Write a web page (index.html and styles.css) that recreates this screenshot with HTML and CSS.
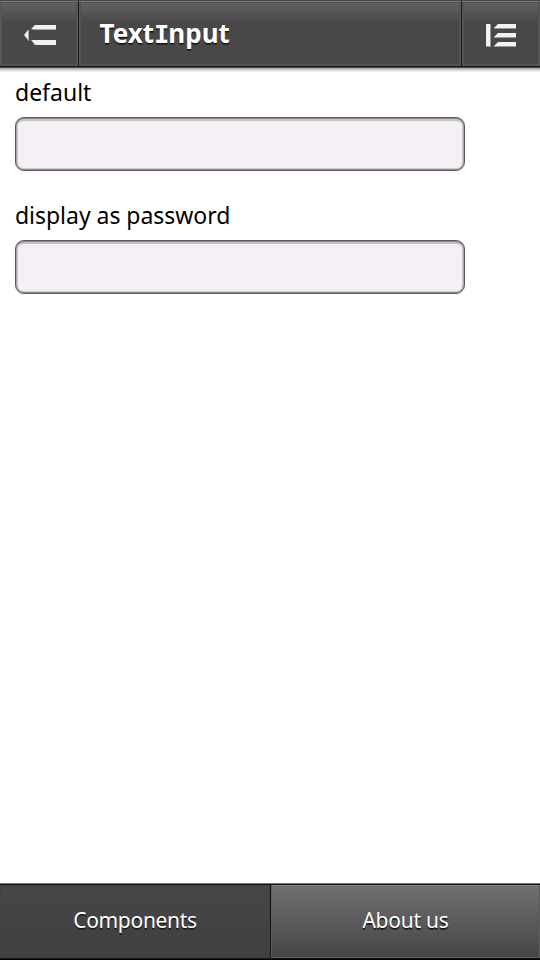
FILE: index.html
```
<!DOCTYPE html>
<html lang="en">
<head>
<meta charset="utf-8">
<title>TextInput</title>
<link rel="stylesheet" href="styles.css">
</head>
<body>
<div class="screen">
  <header class="topbar">
    <button class="cell back" aria-label="Back">
      <svg width="34" height="24" viewBox="0 0 34 24">
        <path fill="#aaa7aa" d="M10 6h23v1H9zM9 17l4 5h-2zM5 7h1v11H5z"/>
        <path fill="#f3eef3" d="M12 2h21v4H8zM8 17h25v5H13zM5 7v10L1 12z"/>
      </svg>
    </button>
    <h1 class="cell heading"><span>Text<span class="serif-i">I</span>nput</span></h1>
    <button class="cell list" aria-label="List">
      <svg width="34" height="26" viewBox="0 0 34 26">
        <path fill="#99969a" d="M3 2h5v23H3zM11 6h22v1H11zM11 15h22v1H11zM11 24h22v1H11z"/>
        <path fill="#f5f0f5" d="M3 2h4v22H3zM15 2h18v4H11zM15 11h18v4H11zM15 20h18v4H11z"/>
      </svg>
    </button>
  </header>
  <main class="content">
    <label class="field"><span class="caption first">default</span><input type="text"></label>
    <label class="field"><span class="caption second">display as password</span><input type="password"></label>
  </main>
  <nav class="tabs">
    <button class="tab active"><span class="components">Components</span></button>
    <button class="tab"><span class="about">About us</span></button>
  </nav>
</div>
</body>
</html>
```
FILE: styles.css
```
* { box-sizing: border-box; }
body { margin: 0; background: #fff; font-family: "Noto Sans", "Open Sans", sans-serif; color: #000; }
button, input, h1 { margin: 0; padding: 0; border: 0; font: inherit; border-radius: 0; }
.screen { width: 540px; height: 960px; display: flex; flex-direction: column; overflow: hidden; }
.topbar {
  height: 68px; flex: none; display: grid; grid-template-columns: 78px 382px 78px; gap: 1px;
  padding: 1px 0 2px; background: linear-gradient(#4a474a 0 1px, #171717 1px 67px, #4a4a4a 67px);
  box-shadow: 0 1px #aaa6aa, 0 2px #c9c5c9, 0 3px #dfdbdf, 0 4px #efebef;
}
.cell {
  display: flex; align-items: center; justify-content: center; color: #fff;
  background: linear-gradient(#656265, #4b494b 19px, #484848 22px, #484848);
  border: 1px solid #5a5a5a; border-top-color: #7b777b; border-bottom-color: #555;
  box-shadow: inset 0 0 0 1px #505050;
}
.cell svg { display: block; }
.back svg { margin: 3px 0 0 1px; }
.list svg { margin: 3px 2px 0 0; }
.heading { justify-content: flex-start; padding: 0 0 2px 19.5px; font-size: 26px; line-height: 34px; font-weight: 700; letter-spacing: 0; text-shadow: 0 1px 0 #151515, 0 2px 0 #2a2a2a; }
.serif-i { font: 700 25.5px/1 "DejaVu Sans Mono", monospace; letter-spacing: -1px; }
.content { flex: 1; padding: 8px 0 0 15px; }
.field { display: block; height: 123px; }
.caption { display: block; height: 41px; font-size: 23px; line-height: 33px; white-space: nowrap; }
.second { letter-spacing: -.03px; }
input {
  display: block; width: 450px; height: 54px; border: 1px solid #5b595b; border-radius: 9px;
  background: #f5f0f5; box-shadow: inset 0 1px #8c888c, inset 1px 0 #a9a6a9, inset -1px 0 #a9a6a9, inset 0 -1px #918d91, inset 0 3px #c6c2c6, inset 2px 0 #cecace, inset -2px 0 #cecace, inset 0 -2px #cecace;
}
.tabs { height: 77px; flex: none; display: grid; grid-template-columns: 270px 269px; gap: 1px; padding: 2px 0; background: linear-gradient(#777477 0 1px, #171417 1px 76px, #050305 76px); }
.tab { color: #fff; font-size: 21px; line-height: 30px; padding-bottom: 3px; text-shadow: 0 1px 0 #171717, 0 2px 0 #2a2a2a; background: linear-gradient(#716e71, #484548); border: 1px solid #5d5b5d; border-top-color: #858185; }
.tab.active { background: linear-gradient(#484548, #404040); border-color: #404240; }
.components { letter-spacing: -.3px; }
.about { letter-spacing: -.25px; }
```
